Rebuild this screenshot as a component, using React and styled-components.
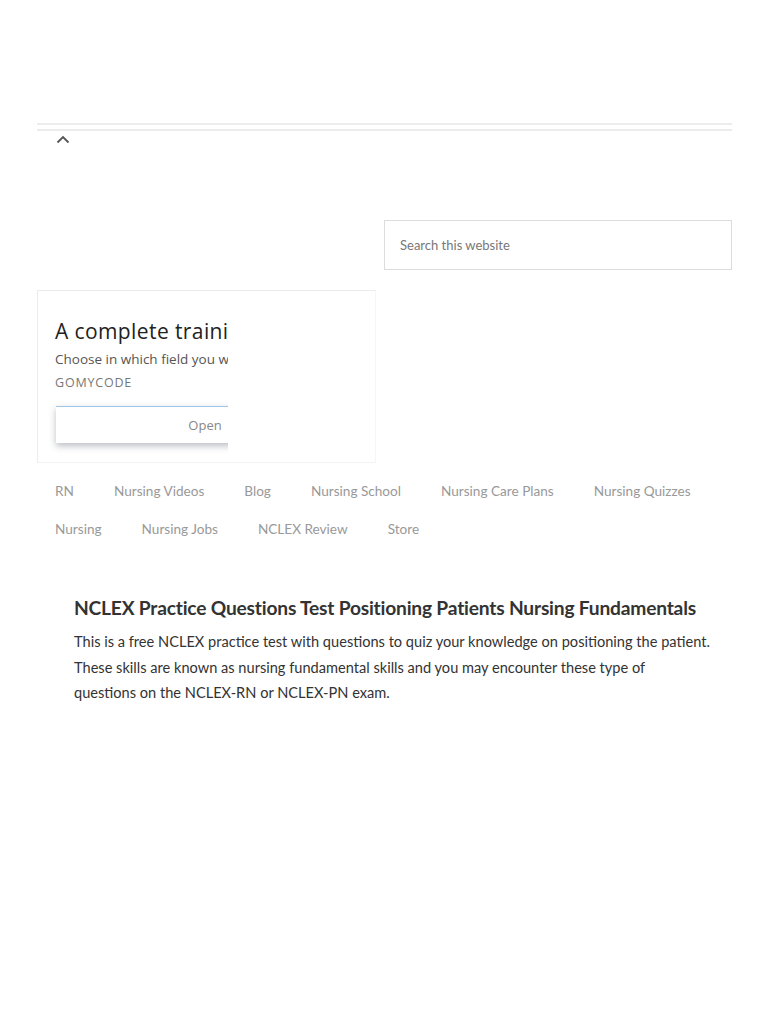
import React from "react";
import styled, { createGlobalStyle } from "styled-components";

const GlobalStyle = createGlobalStyle`
  html, body {
    margin: 0;
    padding: 0;
    background: #fff;
  }
  body {
    font-family: Lato, "Liberation Sans", sans-serif;
    color: #333;
  }
`;

const navRows = [
  ["RN", "Nursing Videos", "Blog", "Nursing School", "Nursing Care Plans", "Nursing Quizzes"],
  ["Nursing", "Nursing Jobs", "NCLEX Review", "Store"],
];

export default function App() {
  return (
    <Page>
      <GlobalStyle />
      <Header>
        <Rule />
        <Rule />
        <Toggle>
          <svg width="14" height="9" viewBox="0 0 14 9" fill="none">
            <path d="M1.5 7.5 L7 2 L12.5 7.5" stroke="#555" strokeWidth="1.8" />
          </svg>
        </Toggle>
      </Header>

      <SearchRow>
        <SearchBox placeholder="Search this website" />
      </SearchRow>

      <AdCard>
        <AdClip>
          <AdInner>
            <AdTitle>A complete training</AdTitle>
            <AdText>Choose in which field you want to grow</AdText>
            <AdBrand>GOMYCODE</AdBrand>
            <AdButton>Open</AdButton>
          </AdInner>
        </AdClip>
      </AdCard>

      <Nav>
        {navRows.map((row, i) => (
          <NavRow key={i}>
            {row.map((item) => (
              <NavLink key={item}>{item}</NavLink>
            ))}
          </NavRow>
        ))}
      </Nav>

      <Article>
        <Title>NCLEX Practice Questions Test Positioning Patients Nursing Fundamentals</Title>
        <Body>
          This is a free NCLEX practice test with questions to quiz your knowledge on positioning the patient.
          These skills are known as nursing fundamental skills and you may encounter these type of
          <br />
          questions on the NCLEX-RN or NCLEX-PN exam.
        </Body>
      </Article>
    </Page>
  );
}

const Page = styled.div`
  width: 695px;
  margin: 0 auto 0 37px;
  padding-top: 123px;
  min-height: 1024px;
  box-sizing: border-box;
`;

const Header = styled.div`
  display: flex;
  flex-direction: column;
  gap: 4px;
`;

const Rule = styled.div`
  height: 2px;
  background: #ececec;
`;

const Toggle = styled.div`
  display: flex;
  padding: 0 0 0 19px;
  height: 12px;
`;

const SearchRow = styled.div`
  display: flex;
  justify-content: flex-end;
  margin-top: 73px;
`;

const SearchBox = styled.input`
  width: 348px;
  height: 50px;
  box-sizing: border-box;
  border: 1px solid #dcdcdc;
  padding: 0 15px;
  font-family: Lato, "Liberation Sans", sans-serif;
  font-size: 13px;
  color: #777;
  outline: none;
  &::placeholder {
    color: #777;
  }
`;

const AdCard = styled.div`
  margin-top: 20px;
  width: 339px;
  height: 173px;
  box-sizing: border-box;
  border: 1px solid #ececec;
  border-right-color: #f6f6f6;
  border-bottom-color: #f3f3f3;
`;

const AdClip = styled.div`
  width: 190px;
  height: 100%;
  overflow: hidden;
`;

const AdInner = styled.div`
  width: 320px;
  padding: 26px 0 0 17px;
  font-family: "Open Sans", Inter, sans-serif;
`;

const AdTitle = styled.div`
  font-size: 21px;
  font-weight: 500;
  color: #222;
  line-height: 28px;
  letter-spacing: 0.4px;
`;

const AdText = styled.div`
  margin-top: 5px;
  font-size: 13.5px;
  color: #555;
  line-height: 18px;
`;

const AdBrand = styled.div`
  margin-top: 7px;
  font-size: 12.5px;
  color: #777;
  letter-spacing: 0.8px;
  line-height: 16px;
`;

const AdButton = styled.div`
  margin-top: 15px;
  margin-left: 1px;
  width: 298px;
  height: 36px;
  display: flex;
  align-items: center;
  justify-content: center;
  border-top: 1px solid #9fc6e6;
  box-shadow: 0 3px 7px rgba(60, 70, 90, 0.35);
  font-size: 13px;
  color: #888;
`;

const Nav = styled.nav`
  display: flex;
  flex-direction: column;
  margin-top: 9px;
  padding-left: 18px;
`;

const NavRow = styled.div`
  display: flex;
  gap: 40px;
  height: 38px;
  align-items: center;
`;

const NavLink = styled.span`
  font-size: 13.6px;
  color: #999;
`;

const Article = styled.div`
  margin-top: 47px;
  padding-left: 37px;
`;

const Title = styled.h1`
  margin: 0;
  font-size: 19.2px;
  font-weight: 700;
  color: #333;
  line-height: 26px;
  letter-spacing: -0.2px;
`;

const Body = styled.p`
  margin: 8px 0 0;
  font-size: 14.6px;
  line-height: 25.5px;
  color: #333;
  max-width: 645px;
`;
